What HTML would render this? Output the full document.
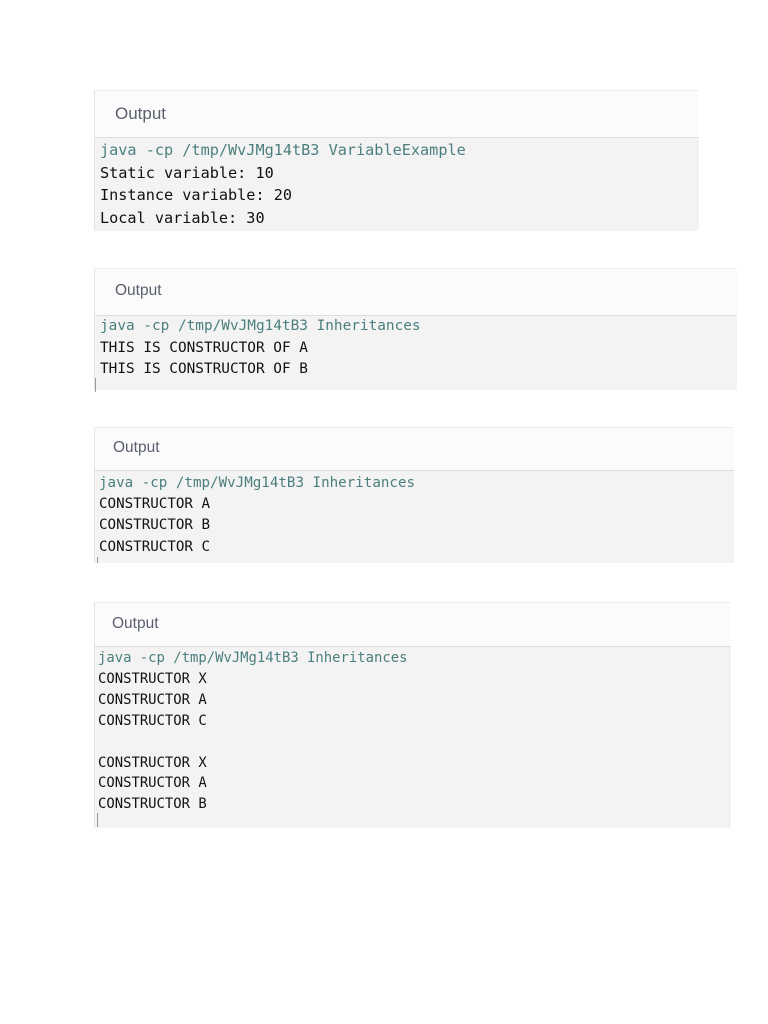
<!DOCTYPE html>
<html><head><meta charset="utf-8"><style>
body{margin:0;width:768px;height:1024px;background:#fff;position:relative;overflow:hidden}
.b{position:absolute;left:94px;border-left:1px solid #e4e6ee}
.h{position:relative;background:#fbfbfc;border-top:1px solid #eceef2;border-bottom:1px solid #dcdfe8;color:#5a5f6e;font-family:"Liberation Sans",sans-serif;box-sizing:border-box}
.h span{position:absolute;left:20px}
.c{background:#f3f3f3;font-family:"DejaVu Sans Mono","Liberation Mono",monospace;color:#111;padding-left:5px;box-sizing:border-box;white-space:pre}
.c div{position:absolute;left:5px}
.c .g{color:#4b7f7e}
.c .cur{width:1px;height:14px;background:#999}
</style></head><body>

<div class="b" style="top:90px;width:604px">
 <div class="h" style="height:48px;font-size:17px"><span style="top:13px">Output</span></div>
 <div class="c" style="height:93px;position:relative;font-size:15.2px">
  <div class="g" style="top:3px">java -cp /tmp/WvJMg14tB3 VariableExample</div>
  <div style="top:26px">Static variable: 10</div>
  <div style="top:48px">Instance variable: 20</div>
  <div style="top:71px">Local variable: 30</div>
 </div>
</div>

<div class="b" style="top:268px;width:642px">
 <div class="h" style="height:48px;font-size:15.5px"><span style="top:13px">Output</span></div>
 <div class="c" style="height:74px;position:relative;font-size:14.4px">
  <div class="g" style="top:2px">java -cp /tmp/WvJMg14tB3 Inheritances</div>
  <div style="top:24px">THIS IS CONSTRUCTOR OF A</div>
  <div style="top:45px">THIS IS CONSTRUCTOR OF B</div>
  <div class="cur" style="top:62px;left:0"></div>
 </div>
</div>

<div class="b" style="top:427px;width:639px">
 <div class="h" style="height:44px;font-size:15.5px"><span style="top:11px;left:18px">Output</span></div>
 <div class="c" style="height:92px;position:relative;font-size:14.2px">
  <div class="g" style="top:4px;left:4px">java -cp /tmp/WvJMg14tB3 Inheritances</div>
  <div style="top:25px;left:4px">CONSTRUCTOR A</div>
  <div style="top:46px;left:4px">CONSTRUCTOR B</div>
  <div style="top:68px;left:4px">CONSTRUCTOR C</div>
  <div class="cur" style="top:86px;left:2px;height:6px"></div>
 </div>
</div>

<div class="b" style="top:602px;width:636px">
 <div class="h" style="height:45px;font-size:15.5px"><span style="top:12px;left:17px">Output</span></div>
 <div class="c" style="height:181px;position:relative;font-size:13.9px">
  <div class="g" style="top:3px;left:3px">java -cp /tmp/WvJMg14tB3 Inheritances</div>
  <div style="top:24px;left:3px">CONSTRUCTOR X</div>
  <div style="top:45px;left:3px">CONSTRUCTOR A</div>
  <div style="top:66px;left:3px">CONSTRUCTOR C</div>
  <div style="top:108px;left:3px">CONSTRUCTOR X</div>
  <div style="top:128px;left:3px">CONSTRUCTOR A</div>
  <div style="top:149px;left:3px">CONSTRUCTOR B</div>
  <div class="cur" style="top:166px;left:2px"></div>
 </div>
</div>

</body></html>
